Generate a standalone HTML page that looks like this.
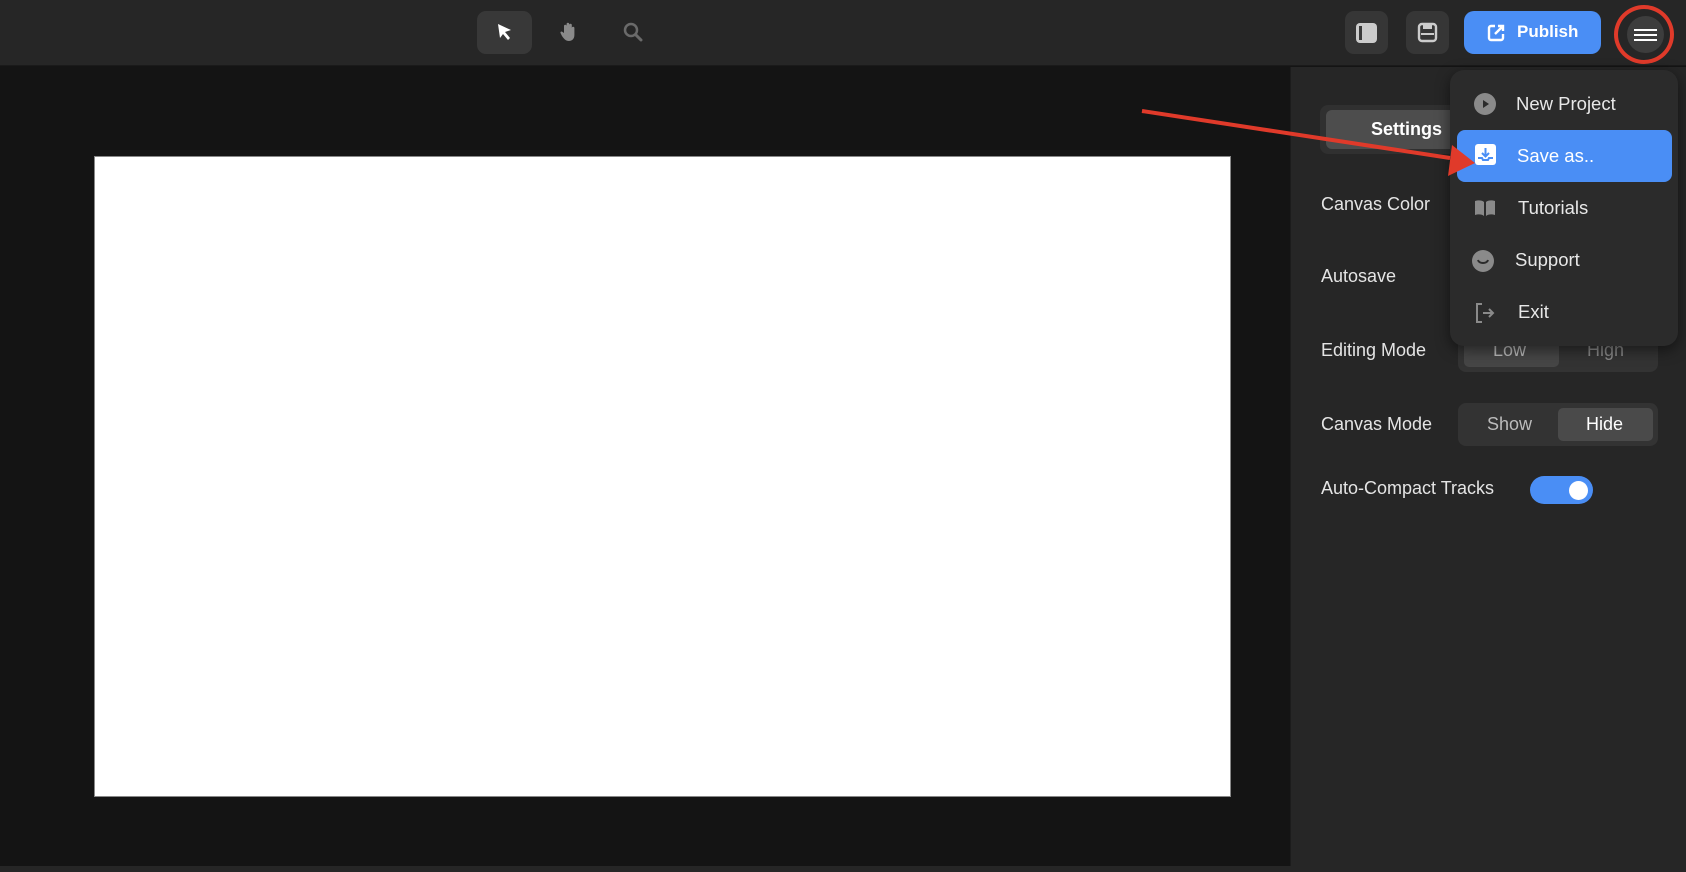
<!DOCTYPE html>
<html><head><style>
*{box-sizing:border-box;margin:0;padding:0}
body{width:1686px;height:872px;background:#141414;font-family:"Liberation Sans",sans-serif;position:relative;overflow:hidden;color:#e6e6e6}
.a{position:absolute}
.top{left:0;top:0;width:1686px;height:66px;background:#262626;border-bottom:1px solid #1a1a1a}
.btn{background:#363636;border-radius:9px}
.lbl{font-size:18px;color:#e4e4e4}
.mi{font-size:18.5px;color:#e8e8e8}
</style></head><body>
<div class="a top"></div>
<div class="a" style="left:0;top:866px;width:1686px;height:6px;background:#262626"></div>
<div class="a" style="left:95px;top:157px;width:1135px;height:639px;background:#fff;box-shadow:0 0 0 1px #888"></div>
<div class="a btn" style="left:477px;top:11px;width:55px;height:43px;background:#383838"></div>
<svg class="a" style="left:495px;top:22px" width="20" height="20" viewBox="0 0 20 20"><path d="M3 2 L16 8 L10 10 L15 16 L13 18 L8 12 L5 16 Z" fill="#fff"/></svg>
<svg class="a" style="left:558px;top:21px" width="22" height="22" viewBox="0 0 22 22"><path d="M6 12V5a1.3 1.3 0 0 1 2.6 0v5V3a1.3 1.3 0 0 1 2.6 0v7V4a1.3 1.3 0 0 1 2.6 0v7V7a1.3 1.3 0 0 1 2.6 0v7c0 4-2.5 6-5.5 6S6 18 4 15l-1.5-3c-.5-1 .8-2 1.7-1.2z" fill="#8a8a8a"/></svg>
<svg class="a" style="left:622px;top:21px" width="22" height="22" viewBox="0 0 22 22"><circle cx="9" cy="9" r="6" stroke="#6a6a6a" stroke-width="2.5" fill="none"/><path d="M13.5 13.5 L19 19" stroke="#6a6a6a" stroke-width="3" stroke-linecap="round"/></svg>
<div class="a btn" style="left:1345px;top:11px;width:43px;height:43px"></div>
<div class="a" style="left:1356px;top:23px;width:21px;height:20px;border-radius:4px;background:#ccc"></div>
<div class="a" style="left:1359px;top:26px;width:3px;height:14px;background:#3a3a3a"></div>
<div class="a btn" style="left:1406px;top:11px;width:43px;height:43px"></div>
<svg class="a" style="left:1417px;top:22px" width="21" height="21" viewBox="0 0 21 21"><rect x="2" y="2" width="17" height="17" rx="3" fill="none" stroke="#ccc" stroke-width="2.4"/><rect x="6" y="3" width="9" height="4" fill="#ccc"/><rect x="4" y="11" width="13" height="2" fill="#ccc"/></svg>
<div class="a" style="left:1464px;top:11px;width:137px;height:43px;background:#4a8ef5;border-radius:10px"></div>
<svg class="a" style="left:1486px;top:23px" width="20" height="20" viewBox="0 0 20 20"><path d="M9 3H5a2 2 0 0 0-2 2v10a2 2 0 0 0 2 2h10a2 2 0 0 0 2-2v-4" fill="none" stroke="#fff" stroke-width="2.4"/><path d="M9 11L17 3M12 3h5v5" fill="none" stroke="#fff" stroke-width="2.4"/></svg>
<div class="a" style="left:1517px;top:22px;font-size:17px;font-weight:bold;color:#fff">Publish</div>
<div class="a" style="left:1627px;top:16px;width:37px;height:37px;border-radius:50%;background:#3d3d3d"></div>
<div class="a" style="left:1634px;top:29px;width:23px;height:2px;background:#fff;box-shadow:0 5px 0 #fff,0 10px 0 #fff"></div>
<div class="a" style="left:1614px;top:5px;width:60px;height:59px;border-radius:50%;border:4px solid #e03a2a"></div>
<div class="a" style="left:1290px;top:67px;width:396px;height:799px;background:#262626;border-left:1px solid #1c1c1c"></div>
<div class="a" style="left:1320px;top:105px;width:200px;height:49px;background:#303030;border-radius:8px"></div>
<div class="a" style="left:1326px;top:110px;width:190px;height:39px;background:#4d4d4d;border-radius:6px"></div>
<div class="a" style="left:1371px;top:119px;font-size:18px;font-weight:bold;color:#fff">Settings</div>
<div class="a lbl" style="left:1321px;top:194px">Canvas Color</div>
<div class="a lbl" style="left:1321px;top:266px">Autosave</div>
<div class="a lbl" style="left:1321px;top:340px">Editing Mode</div>
<div class="a" style="left:1458px;top:329px;width:200px;height:43px;background:#333;border-radius:8px"></div>
<div class="a" style="left:1464px;top:335px;width:95px;height:32px;background:#464646;border-radius:5px"></div>
<div class="a" style="left:1493px;top:340px;font-size:18px;color:#bbb">Low</div>
<div class="a" style="left:1587px;top:340px;font-size:18px;color:#888">High</div>
<div class="a lbl" style="left:1321px;top:414px">Canvas Mode</div>
<div class="a" style="left:1458px;top:403px;width:200px;height:43px;background:#333;border-radius:8px"></div>
<div class="a" style="left:1558px;top:408px;width:95px;height:33px;background:#4a4a4a;border-radius:5px"></div>
<div class="a" style="left:1487px;top:414px;font-size:18px;color:#bbb">Show</div>
<div class="a" style="left:1586px;top:414px;font-size:18px;color:#fff">Hide</div>
<div class="a lbl" style="left:1321px;top:478px">Auto-Compact Tracks</div>
<div class="a" style="left:1530px;top:476px;width:63px;height:28px;background:#4a8ef5;border-radius:14px"></div>
<div class="a" style="left:1569px;top:481px;width:19px;height:19px;background:#fff;border-radius:50%"></div>
<div class="a" style="left:1450px;top:70px;width:228px;height:276px;background:#2b2b2b;border-radius:14px;box-shadow:0 4px 14px rgba(0,0,0,.5)"></div>
<div class="a" style="left:1457px;top:130px;width:215px;height:52px;background:#4a8ef5;border-radius:8px"></div>
<svg class="a" style="left:1474px;top:93px" width="22" height="22" viewBox="0 0 22 22"><circle cx="11" cy="11" r="11" fill="#8a8a8a"/><path d="M9 7l6 4-6 4z" fill="#2b2b2b"/></svg>
<div class="a mi" style="left:1516px;top:93px">New Project</div>
<svg class="a" style="left:1475px;top:144px" width="21" height="21" viewBox="0 0 21 21"><rect x="0" y="0" width="21" height="21" rx="3" fill="#fff"/><path d="M10.5 4v8M7 9l3.5 3.5L14 9" stroke="#4a8ef5" stroke-width="2" fill="none"/><path d="M3 14h4l1 2h5l1-2h4" stroke="#4a8ef5" stroke-width="2" fill="none"/></svg>
<div class="a mi" style="left:1517px;top:145px;color:#fff">Save as..</div>
<svg class="a" style="left:1474px;top:199px" width="22" height="18" viewBox="0 0 22 18"><path d="M1 2c3-1 7-1 9 1v14c-2-2-6-2-9-1zM21 2c-3-1-7-1-9 1v14c2-2 6-2 9-1z" fill="#8a8a8a"/></svg>
<div class="a mi" style="left:1518px;top:197px">Tutorials</div>
<svg class="a" style="left:1472px;top:250px" width="22" height="22" viewBox="0 0 22 22"><circle cx="11" cy="11" r="11" fill="#8a8a8a"/><path d="M6 10c1 4 9 4 10 0" stroke="#2b2b2b" stroke-width="2" fill="none"/></svg>
<div class="a mi" style="left:1515px;top:249px">Support</div>
<svg class="a" style="left:1474px;top:302px" width="22" height="22" viewBox="0 0 22 22"><path d="M8 2H3v18h5" stroke="#8a8a8a" stroke-width="2" fill="none"/><path d="M9 11h10M15 7l4 4-4 4" stroke="#8a8a8a" stroke-width="2" fill="none"/></svg>
<div class="a mi" style="left:1518px;top:301px">Exit</div>
<svg class="a" style="left:0;top:0" width="1686" height="872"><line x1="1142" y1="111" x2="1450" y2="158" stroke="#e03a2a" stroke-width="4"/><path d="M1475 163 L1448 176 L1452 145 Z" fill="#e03a2a"/></svg>
</body></html>
